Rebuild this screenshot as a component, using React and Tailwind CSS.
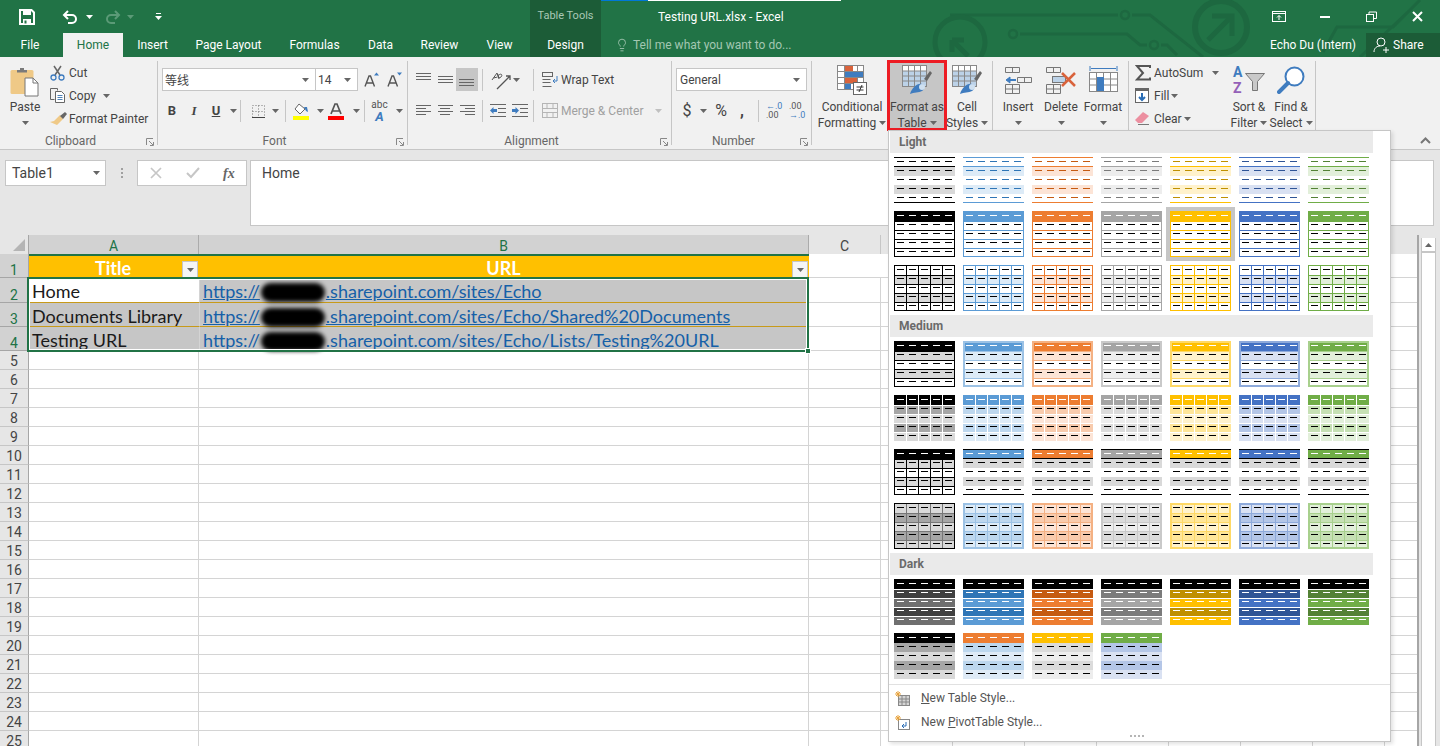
import React from 'react';
import { Lightbulb } from 'lucide-react';

const SANS = "font-['Roboto',sans-serif]";

const Caret = ({ color = '#666' }) => (
  <svg width="7" height="4" viewBox="0 0 7 4" className="shrink-0"><path d="M0 0h7L3.5 4z" fill={color} /></svg>
);

const Sep = () => <div className="w-px h-[22px] bg-[#c6c6c6] shrink-0" />;

// --- title bar icons
const SaveIcon = () => (
  <svg width="16" height="16" viewBox="0 0 16 16" fill="none"><path d="M1 1h11.5L15 3.5V15H1z" stroke="#fff" strokeWidth="2" /><path d="M4 1h8v5H4zM4 10h8v5H4z" fill="#fff" /><rect x="5.5" y="11.5" width="2" height="3" fill="#217346" /></svg>
);
const UndoIcon = ({ color = '#fff' }) => (
  <svg width="16" height="14" viewBox="0 0 16 14" fill="none"><path d="M6 1 2 5l4 4" stroke={color} strokeWidth="2" /><path d="M2.5 5H10a4 4 0 0 1 0 8H6" stroke={color} strokeWidth="2" /></svg>
);
const RedoIcon = ({ color = '#5b9a77' }) => (
  <svg width="16" height="14" viewBox="0 0 16 14" fill="none"><path d="m10 1 4 4-4 4" stroke={color} strokeWidth="2" /><path d="M13.5 5H6a4 4 0 0 0 0 8h4" stroke={color} strokeWidth="2" /></svg>
);
const CircuitArt = () => (
  <svg width="560" height="57" viewBox="0 0 560 57" fill="none" stroke="#1d6840" strokeWidth="3" className="absolute right-0 top-0">
    <path d="M70 15H238M252 15H270L323 57" />
    <circle cx="245" cy="15" r="4" strokeWidth="2.500" />
    <path d="M140 34H247L260 45H267" />
    <circle cx="133" cy="34" r="4" strokeWidth="2.500" />
    <circle cx="274" cy="45" r="4" strokeWidth="2.500" />
    <path d="M281 45H287L297 55" />
    <circle cx="80" cy="42" r="25" strokeWidth="5" />
    <path d="M72 40h12M72 40v12M72 40l16 16" strokeWidth="5" />
    <circle cx="341" cy="27" r="26" strokeWidth="6" />
    <path d="M332 16h20v20M352 16l-24 24" strokeWidth="5" />
    <path d="M443 52 457 27H513L540 0M480 57l50-47" />
  </svg>
);

// --- ribbon icons
const PasteIcon = () => (
  <svg width="30" height="30" viewBox="0 0 30 30">
    <rect x="0.5" y="3" width="23" height="24" rx="1.5" fill="#efc987" />
    <path d="M7 5V3h3V1h4v2h3v2.500H7z" fill="#7a7a7a" />
    <path d="M15 11h8l5 5v13H15z" fill="#fff" stroke="#777" />
    <path d="M23 11v5h5" fill="none" stroke="#777" />
  </svg>
);
const CutIcon = () => (
  <svg width="15" height="16" viewBox="0 0 15 16" fill="none">
    <path d="M4 1l6 9M11 1 5 10" stroke="#666" strokeWidth="1.500" />
    <circle cx="3.500" cy="12.500" r="2.500" stroke="#3f7cbf" strokeWidth="1.300" />
    <circle cx="11.500" cy="12.500" r="2.500" stroke="#3f7cbf" strokeWidth="1.300" />
  </svg>
);
const CopyIcon = () => (
  <svg width="16" height="15" viewBox="0 0 16 15" fill="none" stroke="#666">
    <path d="M.5.5h7v2M.5.5v11h4" />
    <path d="M5.500 3.500h6l3 3v8h-9z" fill="#fff" />
    <path d="M7.500 7.500h5M7.500 9.500h5M7.500 11.500h5" stroke="#4d82b8" />
  </svg>
);
const BrushIcon = () => (
  <svg width="17" height="14" viewBox="0 0 17 14"><path d="m10 3 3 4-6 6-7-3 4-1z" fill="#efc987" /><path d="m10 4 5-4 2 2-4 5z" fill="#666" /></svg>
);
const GrowFont = ({ up }) => (
  <svg width="15" height="16" viewBox="0 0 15 16">
    <path d="M1 14.500 5 4h1.500l4 10.500M2.500 11H9" fill="none" stroke="#555" strokeWidth="1.400" />
    <path d={up ? 'M10 3.500 12.500 .5 15 3.500z' : 'M10 .5h5l-2.500 3z'} fill="#3f7cbf" />
  </svg>
);
const BorderIcon = () => (
  <svg width="13" height="13" viewBox="0 0 13 13" fill="none" stroke="#777" strokeDasharray="1 2"><path d="M.5.5h12v12H.5zM6.500.5v12M.5 6.500h12" /><path d="M0 12.500h13" stroke="#444" strokeDasharray="none" /></svg>
);
const FillIcon = () => (
  <svg width="17" height="17" viewBox="0 0 17 17"><path d="m6 1 6 5-5 5-5-5z" fill="#fff" stroke="#666" /><path d="M11 4h3l1 5-2-1z" fill="#3f7cbf" /><rect y="13" width="16" height="4" fill="#ff0" /></svg>
);
const FontColorIcon = () => (
  <svg width="16" height="17" viewBox="0 0 16 17"><path d="M3 11 7 1h2l4 10M4.500 8h7" fill="none" stroke="#555" strokeWidth="1.700" /><rect y="13" width="16" height="4" fill="#f00" /></svg>
);
const PhoneticIcon = () => (
  <div className="w-[13px] h-[24px] text-center flex flex-col items-center">
    <div className="h-[11px] text-[10px] text-[#555] leading-[11px]">abc</div>
    <div className="h-[13px] text-[13px] font-bold italic text-[#3f7cbf] leading-[13px]">A</div>
  </div>
);
const AlignLines = ({ lines }) => (
  <svg width="15" height="13" viewBox="0 0 15 13" stroke="#666">
    {lines.map(([x1, x2, y]) => <path key={y} d={`M${x1} ${y + 0.5}H${x2}`} />)}
  </svg>
);
const OrientIcon = () => (
  <svg width="22" height="22" viewBox="0 0 22 22" fill="none">
    <path d="m2 11 5-7 2 6M3.500 9l4-1M9 6c2-2 4 0 2 2l-2 1-1-3z" stroke="#555" />
    <path d="m7 20 13-13M16 7h4v4" stroke="#555" strokeWidth="1.300" />
  </svg>
);
const IndentIcon = ({ flip }) => (
  <svg width="16" height="13" viewBox="0 0 16 13">
    <path d="M0 .5h16M8 4.500h8M8 8.500h8M0 12.500h16" stroke="#666" />
    <path d={flip ? 'M0 6.500 3.500 3v2H7v3H3.500v2z' : 'M7 6.500 3.500 3v2H0v3h3.500v2z'} fill="#3f7cbf" />
  </svg>
);
const WrapIcon = () => (
  <svg width="16" height="16" viewBox="0 0 16 16" fill="none" stroke="#666">
    <rect x=".5" y=".5" width="10" height="4" />
    <path d="M.5 7.500h8M.5 10.500h8M.5 14.500h9" />
    <path d="M15 4v5h-4m2-2-2 2 2 2" stroke="#3f7cbf" />
  </svg>
);
const MergeIcon = () => (
  <svg width="16" height="15" viewBox="0 0 16 15" fill="none" stroke="#b5b5b5"><rect x=".5" y=".5" width="15" height="14" /><path d="M.5 5.500h15M.5 9.500h15M5 .5v5M11 .5v5M5 9.500v5M11 9.500v5" /></svg>
);
const CondIcon = () => (
  <svg width="30" height="30" viewBox="0 0 30 30" fill="none" stroke="#888">
    <rect x=".5" y=".5" width="26" height="24" fill="#fff" />
    <path d="M.5 6.500h26M.5 12.500h26M.5 18.500h26M7.500.5v24M20.500.5v24" />
    <rect x="8" y="1" width="8" height="5" fill="#d9633c" stroke="none" />
    <rect x="8" y="7" width="18" height="5" fill="#3f7cbf" stroke="none" />
    <rect x="8" y="13" width="12" height="5" fill="#d9633c" stroke="none" />
    <rect x="8" y="19" width="6" height="5" fill="#3f7cbf" stroke="none" />
    <rect x="16.500" y="17.500" width="13" height="12" fill="#fff" stroke="#666" />
    <path d="M19.500 22h7M19.500 25h7M25 20l-3 7" stroke="#333" />
  </svg>
);
const TableBrushIcon = () => (
  <svg width="30" height="30" viewBox="0 0 30 30" fill="none" stroke="#888">
    <rect x=".5" y=".5" width="24" height="21" fill="#fff" />
    <rect x="1" y="6" width="23" height="15" fill="#bcd2e8" stroke="none" />
    <path d="M.5 6h24M.5 11h24M.5 16h24M6.500.5v21M12.500.5v21M18.500.5v21" />
    <path d="m22 14 6-8 2 2-5 8z" fill="#666" stroke="none" />
    <path d="M8 29c2-6 7-11 12-10 3 1 3 5 0 7-3 2-8 1-12 3z" fill="#3f7cbf" stroke="none" />
    <circle cx="20" cy="22" r="3" fill="#cfe0f0" stroke="none" />
  </svg>
);
const InsertIcon = () => (
  <svg width="27" height="27" viewBox="0 0 27 27" fill="none" stroke="#777">
    <path d="M.5.5h14v5H.5zM7.500.5v5M12.500 10.500h14v5h-14zM19.500 10.500v5M.5 17.500h14v9H.5zM.5 22h14M7.500 17.500v9" />
    <path d="M1 13l4-3v6z" stroke="#3f7cbf" fill="#3f7cbf" />
    <path d="M4 13h7" stroke="#3f7cbf" strokeWidth="2" />
  </svg>
);
const DeleteIcon = () => (
  <svg width="30" height="27" viewBox="0 0 30 27" fill="none" stroke="#777">
    <path d="M.5.5h14v5H.5zM7.500.5v5M.5 17.500h14v9H.5zM.5 22h14M7.500 17.500v9" />
    <rect x="6.500" y="9.500" width="13" height="6" fill="#bcd2e8" stroke="#777" />
    <path d="m16 6 13 13M29 6 16 19" stroke="#d9633c" strokeWidth="2.500" />
  </svg>
);
const FormatIcon = () => (
  <svg width="29" height="31" viewBox="0 0 29 31" fill="none" stroke="#888">
    <path d="M1 1v5M28 1v5M2 3.500h25" stroke="#3f7cbf" />
    <rect x=".5" y="7.500" width="28" height="19" fill="#fff" />
    <path d="M.5 14h28M.5 20h28M7.500 7.500V27M14.500 7.500V27M21.500 7.500V27" />
    <rect x="8" y="12" width="7" height="14" fill="#3f7cbf" stroke="none" />
  </svg>
);
const SigmaIcon = () => (
  <svg width="16" height="16" viewBox="0 0 16 16" fill="none"><path d="M15 3V1H2l6 7-6 6.500h13v-2" stroke="#555" strokeWidth="2" /></svg>
);
const FillDownIcon = () => (
  <svg width="14" height="15" viewBox="0 0 14 15" fill="none"><rect x=".5" y=".5" width="13" height="14" fill="#fff" stroke="#666" /><rect x="0" y="0" width="14" height="3" fill="#666" /><path d="M7 5v7M4 9l3 3 3-3" stroke="#2a6db5" strokeWidth="2" /></svg>
);
const EraserIcon = () => (
  <svg width="15" height="13" viewBox="0 0 15 13"><path d="m0 8 8-8 6 4-7 7H3z" fill="#ec8fa0" /><path d="M3 12.500h11" stroke="#777" /></svg>
);
const SortIcon = () => (
  <div className="relative w-[32px] h-[32px] font-bold text-[14px] leading-[16px]">
    <div className="h-[16px] text-[#3f7cbf]">A</div>
    <div className="h-[16px] text-[#9460b8]">Z</div>
    <svg width="20" height="18" viewBox="0 0 20 18" fill="none" className="absolute right-0 top-[9px]">
      <path d="M.5.5h19l-7 8v9h-5v-9z" fill="#c9c9c9" stroke="#777" />
    </svg>
  </div>
);
const FindIcon = () => (
  <svg width="28" height="28" viewBox="0 0 28 28" fill="none"><circle cx="17.500" cy="10.500" r="9" stroke="#3f7cbf" strokeWidth="2" fill="#fff" /><path d="m11 17-9 9" stroke="#3f7cbf" strokeWidth="4" strokeLinecap="round" /></svg>
);

const Launcher = () => (
  <svg width="8" height="8" viewBox="0 0 8 8" fill="none" stroke="#888" className="absolute right-[3px] top-[7px]">
    <path d="M.5 7V.5H7" /><path d="m3 3 4 4M4 7.500h3.500V4" />
  </svg>
);

const Group = ({ label, launcher, className, children }) => (
  <div className={`flex flex-col shrink-0 h-[84px] border-r border-[#c6c6c6] ${className}`}>
    <div className="h-[70px] flex">{children}</div>
    <div className="relative h-[14px] pr-[16px] text-center text-[12px] leading-[20px] text-[#666]">
      {label}
      {launcher && <Launcher />}
    </div>
  </div>
);

const Big = ({ icon, lines, caret, className = '' }) => (
  <div className={`flex flex-col items-center shrink-0 ${className}`}>
    <div className="h-[38px] flex items-center justify-center">{icon}</div>
    {lines.map((line, i) => (
      <div key={line} className="h-[16px] leading-[16px] flex items-center gap-[3px] whitespace-nowrap">
        {line}
        {caret && i === lines.length - 1 && <Caret />}
      </div>
    ))}
    {lines.length === 1 && <div className="h-[16px] flex items-center"><Caret /></div>}
  </div>
);

const Small = ({ icon, text, caret, gap = 'ml-[8px]' }) => (
  <div className="h-[23px] flex items-center whitespace-nowrap">
    <div className="w-[19px] flex justify-start shrink-0">{icon}</div>
    <span>{text}</span>
    {caret && <span className={gap}><Caret /></span>}
  </div>
);

const Combo = ({ className, children }) => (
  <div className={`h-[23px] bg-white border border-[#c6c6c6] flex items-center justify-between pl-[2px] pr-[6px] shrink-0 ${className}`}>
    <span className="truncate">{children}</span>
    <Caret />
  </div>
);

const Ribbon = () => (
  <div className="h-[93px] bg-[#f1f1f1] border-b border-[#c6c6c6] flex pt-[4px] text-[12px] text-[#444] shrink-0 relative">
    <Group label="Clipboard" launcher className="w-[158px]">
      <div className="w-[50px] flex flex-col items-center">
        <div className="h-[38px] flex items-center pt-[4px]"><PasteIcon /></div>
        <div className="h-[16px] leading-[16px]">Paste</div>
        <div className="h-[16px] flex items-center"><Caret /></div>
      </div>
      <div>
        <Small icon={<CutIcon />} text="Cut" />
        <Small icon={<CopyIcon />} text="Copy" caret gap="ml-[7px]" />
        <Small icon={<BrushIcon />} text="Format Painter" />
      </div>
    </Group>

    <Group label="Font" launcher className="w-[250px]">
      <div className="pl-[4px] pt-[7px]">
        <div className="flex items-center">
          <Combo className="w-[154px] font-['Noto_Sans_CJK_SC',sans-serif]">等线</Combo>
          <Combo className="w-[43px] ml-[-1px]">14</Combo>
          <div className="w-[23px] flex justify-center ml-[2px]"><GrowFont up /></div>
          <div className="w-[23px] flex justify-center"><GrowFont /></div>
        </div>
        <div className="flex items-center h-[22px] mt-[9px] text-[13px]">
          <div className="w-[22px] ml-[-1px] text-center font-bold">B</div>
          <div className="w-[22px] text-center italic font-['Liberation_Serif',serif] font-bold">I</div>
          <div className="w-[22px] text-center underline font-bold">U</div>
          <div className="w-[10px] ml-[3px]"><Caret /></div>
          <div className="w-[12px]"><Sep /></div>
          <div className="w-[20px]"><BorderIcon /></div>
          <div className="w-[11px]"><Caret /></div>
          <div className="w-[8px] ml-[2px]"><Sep /></div>
          <div className="w-[24px]"><FillIcon /></div>
          <div className="w-[10px]"><Caret /></div>
          <div className="w-[26px] pl-[1px]"><FontColorIcon /></div>
          <div className="w-[11px]"><Caret /></div>
          <div className="w-[9px]"><Sep /></div>
          <div className="w-[23px]"><PhoneticIcon /></div>
          <div className="w-[10px]"><Caret /></div>
        </div>
      </div>
    </Group>

    <Group label="Alignment" launcher className="w-[264px]">
      <div className="pl-[8px] pt-[7px]">
        <div className="flex items-center h-[23px]">
          <div className="w-[22px] h-[23px] pt-[4px]"><AlignLines lines={[[0, 15, 1], [0, 15, 4], [0, 15, 7]]} /></div>
          <div className="w-[18px] h-[23px] pt-[7px]"><AlignLines lines={[[0, 15, 1], [0, 15, 4], [0, 15, 7]]} /></div>
          <div className="w-[22px] h-[23px] bg-[#c6c6c6] pt-[10px] pl-[3px]"><AlignLines lines={[[0, 15, 1], [0, 15, 4], [0, 15, 7]]} /></div>
          <div className="w-[12px] pl-[4px]"><Sep /></div>
          <div className="w-[23px]"><OrientIcon /></div>
          <div className="w-[20px]"><Caret /></div>
          <Sep />
          <div className="flex items-center ml-[8px]">
            <div className="w-[19px]"><WrapIcon /></div>
            <span>Wrap Text</span>
          </div>
        </div>
        <div className="flex items-center h-[23px] mt-[8px]">
          <div className="w-[22px]"><AlignLines lines={[[0, 15, 1], [0, 10, 4], [0, 15, 7], [0, 10, 10]]} /></div>
          <div className="w-[22px]"><AlignLines lines={[[0, 15, 1], [2, 12, 4], [0, 15, 7], [2, 12, 10]]} /></div>
          <div className="w-[18px]"><AlignLines lines={[[0, 15, 1], [5, 15, 4], [0, 15, 7], [5, 15, 10]]} /></div>
          <div className="w-[12px] pl-[4px]"><Sep /></div>
          <div className="w-[22px]"><IndentIcon flip /></div>
          <div className="w-[21px]"><IndentIcon /></div>
          <Sep />
          <div className="flex items-center ml-[8px] text-[#a0a0a0]">
            <div className="w-[19px]"><MergeIcon /></div>
            <span>Merge &amp; Center</span>
            <span className="ml-[12px]"><Caret color="#c0c0c0" /></span>
          </div>
        </div>
      </div>
    </Group>

    <Group label="Number" launcher className="w-[140px]">
      <div className="pl-[4px] pt-[7px]">
        <Combo className="w-[131px] pl-[3px]">General</Combo>
        <div className="flex items-center h-[23px] mt-[8px] text-[16px]">
          <div className="w-[14px] ml-[4px] text-center">$</div>
          <div className="w-[14px] pl-[6px]"><Caret /></div>
          <div className="w-[26px] text-center">%</div>
          <div className="w-[16px] text-center font-bold">,</div>
          <div className="w-[8px] ml-[8px]"><Sep /></div>
          <div className="w-[23px] text-[9px] leading-[9px] text-[#555]"><div className="text-[#3f7cbf] h-[9px]">←.0</div><div className="h-[9px]">.00</div></div>
          <div className="w-[16px] text-[9px] leading-[9px] text-[#555]"><div className="h-[9px]">.00</div><div className="text-[#3f7cbf] h-[9px]">→.0</div></div>
        </div>
      </div>
    </Group>

    <Group label="" className="w-[181px]">
      <Big icon={<CondIcon />} lines={['Conditional', 'Formatting']} caret className="w-[75px] pl-[5px]" />
      <div className="h-[71px] w-[60px] shrink-0 border-[3px] border-[#ed1c24] mt-[-1px] bg-[#c6c6c6]">
        <Big icon={<TableBrushIcon />} lines={['Format as', 'Table']} caret className="w-full mt-[-2px]" />
      </div>
      <Big icon={<TableBrushIcon />} lines={['Cell', 'Styles']} caret className="w-[40px]" />
    </Group>

    <Group label="" className="w-[136px]">
      <Big icon={<InsertIcon />} lines={['Insert']} className="w-[44px] ml-[3px]" />
      <Big icon={<DeleteIcon />} lines={['Delete']} className="w-[42px]" />
      <Big icon={<FormatIcon />} lines={['Format']} className="w-[42px]" />
    </Group>

    <Group label="" className="w-[187px]">
      <div className="pl-[6px] w-[99px]">
        <Small icon={<SigmaIcon />} text="AutoSum" caret gap="ml-[9px]" />
        <Small icon={<FillDownIcon />} text="Fill" caret gap="ml-[2px]" />
        <Small icon={<EraserIcon />} text="Clear" caret gap="ml-[2px]" />
      </div>
      <Big icon={<SortIcon />} lines={['Sort &', 'Filter']} caret className="w-[42px]" />
      <Big icon={<FindIcon />} lines={['Find &', 'Select']} caret className="w-[42px]" />
    </Group>

    <svg width="11" height="7" viewBox="0 0 11 7" fill="none" className="absolute right-[9px] bottom-[5px]"><path d="m1 6 4.500-4.500L10 6" stroke="#777" strokeWidth="2" /></svg>
  </div>
);

const TitleBar = () => (
  <div className="relative h-[57px] bg-[#217346] text-white text-[12px] shrink-0 overflow-hidden">
    <CircuitArt />
    <div className="relative h-[33px] flex items-center">
      <div className="w-[530px] flex items-center">
        <div className="ml-[19px]"><SaveIcon /></div>
        <div className="ml-[27px]"><UndoIcon /></div>
        <div className="ml-[8px]"><Caret color="#fff" /></div>
        <div className="ml-[12px]"><RedoIcon /></div>
        <div className="ml-[6px]"><Caret color="#5b9a77" /></div>
        <div className="ml-[21px] flex flex-col items-center gap-[2px]"><div className="w-[5px] h-px bg-white" /><Caret color="#fff" /></div>
      </div>
      <div className="w-[71px] h-full bg-[#1c5c37] text-[#a9c9b6] text-[11px] flex items-center justify-center whitespace-nowrap">Table Tools</div>
      <div className="relative flex-1 h-full flex items-center pl-[57px] whitespace-nowrap">
        <div className="absolute left-0 top-0 flex h-px">
          <div className="w-[47px] bg-[#0078d7]" />
          <div className="w-[193px] bg-white" />
        </div>
        Testing URL.xlsx - Excel
      </div>
      <div className="flex items-center">
        <div className="w-[46px] flex justify-center">
          <svg width="14" height="11" viewBox="0 0 14 11" fill="none" stroke="#fff"><rect x=".5" y=".5" width="13" height="10" /><path d="M.5 2.500h13M7 9V4.500M5 6.500l2-2 2 2" /></svg>
        </div>
        <div className="w-[46px] flex justify-center"><div className="w-[10px] h-[2px] bg-white" /></div>
        <div className="w-[46px] flex justify-center">
          <svg width="11" height="11" viewBox="0 0 11 11" fill="none" stroke="#fff"><path d="M3 3V1h7.500v6.500H8" /><rect x=".5" y="3.500" width="7" height="7" /></svg>
        </div>
        <div className="w-[46px] flex justify-center">
          <svg width="11" height="11" viewBox="0 0 11 11" fill="none" stroke="#fff" strokeWidth="2"><path d="m1 1 9 9M10 1l-9 9" /></svg>
        </div>
      </div>
    </div>
    <div className="relative h-[24px] flex items-stretch leading-[24px]">
      {[
        ['File', 'w-[59px] pl-[1px]'],
        ['Home', 'w-[60px] ml-[4px] bg-[#f1f1f1] text-[#217346]'],
        ['Insert', 'w-[59px]'],
        ['Page Layout', 'w-[93px]'],
        ['Formulas', 'w-[79px]'],
        ['Data', 'w-[53px]'],
        ['Review', 'w-[65px]'],
        ['View', 'w-[55px]'],
        ['Design', 'w-[71px] ml-[3px] bg-[#1c5c37]'],
      ].map(([name, cls]) => (
        <div key={name} className={`text-center whitespace-nowrap shrink-0 ${cls}`}>{name}</div>
      ))}
      <div className="flex items-center ml-[14px] text-[#a3c7b2] whitespace-nowrap">
        <Lightbulb size={14} strokeWidth={1.500} />
        <span className="ml-[4px]">Tell me what you want to do...</span>
      </div>
      <div className="flex-1" />
      <div className="whitespace-nowrap mr-[10px]">Echo Du (Intern)</div>
      <div className="w-[74px] bg-[#1c5c37] flex items-center pl-[7px] gap-[4px]">
        <svg width="16" height="16" viewBox="0 0 16 16" fill="none" stroke="#fff"><circle cx="8" cy="5" r="4" /><path d="M1 15c0-4 3-6 6-6M10 13h6M13 10v6" /></svg>
        Share
      </div>
    </div>
  </div>
);

const FormulaBar = () => (
  <div className="h-[85px] bg-[#e6e6e6] flex pt-[10px] text-[14px] text-[#444] shrink-0">
    <div className="w-[101px] h-[26px] ml-[5px] bg-white border border-[#c6c6c6] flex items-center justify-between pl-[6px] pr-[5px]">
      Table1
      <Caret />
    </div>
    <div className="w-[31px] h-[26px] flex items-center justify-center">
      <div className="w-[2px] h-[10px] border-l-2 border-dotted border-[#a0a0a0]" />
    </div>
    <div className="w-[110px] h-[26px] bg-white border border-[#c6c6c6] flex items-center text-[#c6c6c6]">
      <svg width="12" height="12" viewBox="0 0 12 12" fill="none" stroke="#c6c6c6" strokeWidth="1.700" className="ml-[12px]"><path d="m1 1 10 10M11 1 1 11" /></svg>
      <svg width="14" height="12" viewBox="0 0 14 12" fill="none" stroke="#c6c6c6" strokeWidth="2" className="ml-[24px]"><path d="m1 6 4 4 8-9" /></svg>
      <span className="ml-[23px] font-['Liberation_Serif',serif] italic font-bold text-[14px] text-[#666]">fx</span>
    </div>
    <div className="w-[1184px] h-[66px] ml-[3px] bg-white border border-[#c6c6c6] pl-[11px] pt-[2px]">Home</div>
  </div>
);

const ROW_HEAD = 'w-[29px] shrink-0 border-r border-b text-center text-[14px] leading-none';
const extraCols = ['D', 'E', 'F', 'G', 'H', 'I', 'J'];

const FilterBtn = () => (
  <div className="w-[16px] h-[17px] mr-px bg-[#f5f5f5] border border-[#c6c6c6] flex items-center justify-center self-end"><Caret /></div>
);

const Redacted = () => (
  <span className="inline-block w-[64px] h-[19px] mx-px align-[-4px] rounded-full bg-black blur-[2px]" />
);

const tableRows = [
  { n: 2, title: 'Home', url: '.sharepoint.com/sites/Echo', h: 'h-[25px]', a: 'bg-white', link: 'underline' },
  { n: 3, title: 'Documents Library', url: '.sharepoint.com/sites/Echo/Shared%20Documents', h: 'h-[24px]', a: 'bg-[#c6c6c6]', link: 'underline' },
  { n: 4, title: 'Testing URL', url: '.sharepoint.com/sites/Echo/Lists/Testing%20URL', h: 'h-[24px]', a: 'bg-[#c6c6c6]', link: '' },
];

const Sheet = () => (
  <div className="relative flex-1 flex min-h-0 bg-[#e6e6e6] font-['Lato',sans-serif] overflow-hidden">
    <div className="w-[1419px] shrink-0 bg-white border-r-2 border-[#a6a6a6]">
      {/* column headers */}
      <div className={`h-[19px] flex text-[14px] leading-[23px] text-center ${SANS}`}>
        <div className="w-[29px] shrink-0 bg-[#e6e6e6] border-r border-[#a6a6a6] flex justify-end items-end pr-[3px] pb-[3px]">
          <svg width="12" height="12" viewBox="0 0 12 12"><path d="M12 0v12H0z" fill="#b5b5b5" /></svg>
        </div>
        <div className="w-[170px] bg-[#d2d2d2] border-r border-[#ababab] text-[#217346]">A</div>
        <div className="w-[610px] bg-[#d2d2d2] border-r border-[#ababab] text-[#217346]">B</div>
        <div className="w-[72px] bg-[#e6e6e6] border-r border-[#c6c6c6] text-[#444]">C</div>
        <div className="flex-1 bg-[#e6e6e6]" />
      </div>
      {/* header row of the table */}
      <div className="h-[24px] flex">
        <div className={`${ROW_HEAD} bg-[#d2d2d2] border-[#a6a6a6] text-[#217346] flex items-end justify-center ${SANS}`}>1</div>
        <div className="w-[780px] flex border-t-2 border-[#217346] bg-[#ffc000] text-white font-bold text-[18px] leading-[24px]">
          <div className="w-[170px] pl-[15px] flex justify-between"><span className="flex-1 text-center">Title</span><FilterBtn /></div>
          <div className="w-[610px] flex"><span className="flex-1 text-center pl-[16px]">URL</span><FilterBtn /></div>
        </div>
        <div className="flex-1 border-b border-[#d4d4d4]" />
      </div>
      {/* body rows */}
      <div className="relative">
        {tableRows.map((row) => (
          <div key={row.n} className={`${row.h} flex`}>
            <div className={`${ROW_HEAD} bg-[#d2d2d2] border-[#a6a6a6] text-[#217346] flex items-end justify-center ${SANS}`}>{row.n}</div>
            <div className={`w-[170px] ${row.a} border-b border-[#c79a1a] pl-[3px] text-[18px] leading-[27px] text-[#1a1a1a] whitespace-nowrap`}>{row.title}</div>
            <div className={`w-[610px] bg-[#c6c6c6] border-l border-b border-l-[#d4d4d4] border-b-[#c79a1a] pl-[3px] text-[18px] leading-[27px] text-[#1560a8] whitespace-nowrap ${row.link}`}>
              https://<Redacted />{row.url}
            </div>
            <div className="w-[72px] border-r border-b border-[#d4d4d4]" />
            <div className="flex-1 border-b border-[#d4d4d4]" />
          </div>
        ))}
        {/* selection frame */}
        <div className="absolute left-[27px] top-[-1px] w-[782px] h-[75px] border-2 border-[#217346] pointer-events-none">
          <div className="absolute inset-0 border border-white" />
          <div className="absolute right-[-4px] bottom-[-4px] w-[6px] h-[6px] bg-[#217346] border border-white" />
        </div>
      </div>
      {/* empty rows */}
      {Array.from({ length: 21 }, (_, i) => i + 5).map((n) => (
        <div key={n} className="h-[19px] flex">
          <div className={`${ROW_HEAD} bg-[#e6e6e6] border-[#c6c6c6] border-r-[#a6a6a6] text-[#444] flex items-center justify-center pt-[1px] ${SANS}`}>{n}</div>
          <div className="w-[170px] border-r border-b border-[#d4d4d4]" />
          <div className="w-[610px] border-r border-b border-[#d4d4d4]" />
          <div className="w-[72px] border-r border-b border-[#d4d4d4]" />
          {extraCols.map((c) => <div key={c} className="w-[72px] border-r border-b border-[#d4d4d4]" />)}
          <div className="flex-1 border-b border-[#d4d4d4]" />
        </div>
      ))}
    </div>
    {/* vertical scrollbar */}
    <div className="w-[15px] ml-[2px] mt-[3px] bg-white border-x border-[#c6c6c6]">
      <div className="h-[15px] border-b-2 border-[#c6c6c6] flex items-center justify-center">
        <svg width="7" height="4" viewBox="0 0 7 4"><path d="M0 4h7L3.500 0z" fill="#666" /></svg>
      </div>
    </div>
  </div>
);

// --- table style gallery
const PAL = [
  { main: '#000000', dash: '#000000', t1: '#d9d9d9', t2: '#a6a6a6', mid: '#000000', dk: '#404040', dm: '#6f6f6f' },
  { main: '#5b9bd5', dash: '#2e75b6', t1: '#ddebf7', t2: '#bdd7ee', mid: '#9cc2e5', dk: '#2e75b6', dm: '#5b9bd5' },
  { main: '#ed7d31', dash: '#c55a11', t1: '#fce4d6', t2: '#f8cbad', mid: '#f4b183', dk: '#c55a11', dm: '#ed7d31' },
  { main: '#a5a5a5', dash: '#7b7b7b', t1: '#ededed', t2: '#dbdbdb', mid: '#c9c9c9', dk: '#7b7b7b', dm: '#a5a5a5' },
  { main: '#ffc000', dash: '#bf9000', t1: '#fff2cc', t2: '#ffe699', mid: '#ffd966', dk: '#bf9000', dm: '#ffc000' },
  { main: '#4472c4', dash: '#2f5496', t1: '#d9e1f2', t2: '#b4c6e7', mid: '#8eaadb', dk: '#2f5496', dm: '#4472c4' },
  { main: '#70ad47', dash: '#538135', t1: '#e2efda', t2: '#c6e0b4', mid: '#a8d08d', dk: '#538135', dm: '#70ad47' },
];
const W = '#ffffff';
const RY = [0, 10, 19, 28, 37];
const RH = [10, 9, 9, 9, 9];
const COLX = [12, 24, 36, 48];

const styleOf = (kind, p, i) => {
  const black = i === 0;
  switch (kind) {
    case 'l1':
      return { fills: [null, p.t1, null, p.t1, null], hTop: p.main, hHead: p.main, hEnd: p.main, dash: p.dash };
    case 'l2':
      return { fills: [p.main, null, null, null, null], outline: p.main, hLines: p.main, dash: '#000', headDash: W };
    case 'l3':
      return { fills: [null, p.t1, null, p.t1, null], outline: p.main, hLines: p.main, vLines: p.main, dash: '#000' };
    case 'm1':
      return { fills: [p.main, p.t1, null, p.t1, null], outline: p.mid, hLines: p.mid, dash: '#000', headDash: W, thick: black ? 1 : 2 };
    case 'm2':
      return { fills: [p.main, p.t2, p.t1, p.t2, p.t1], hLines: W, vLines: W, dash: '#000', headDash: W };
    case 'm3':
      return black
        ? { fills: [p.main, p.t1, null, p.t1, null], outline: '#000', hLines: '#000', vLines: '#000', dash: '#000', headDash: W }
        : { fills: [p.main, '#d9d9d9', null, '#d9d9d9', null], hTop: '#000', hHead: '#000', hEnd: '#000', dash: '#000', headDash: W };
    case 'm4':
      return {
        fills: black ? ['#d9d9d9', '#a6a6a6', '#d9d9d9', '#a6a6a6', '#d9d9d9'] : [p.t1, p.t2, p.t1, p.t2, p.t1],
        outline: black ? '#000' : p.mid,
        hLines: black ? '#777' : p.mid,
        vLines: black ? '#777' : p.mid,
        dash: '#000',
        thick: black ? 1 : 2,
      };
    default:
      return { fills: ['#000', p.dk, p.dm, p.dk, p.dm], hLines: W, dash: W, headDash: W };
  }
};

const Thumb = ({ s }) => {
  const t = s.thick || 1;
  return (
    <svg width="61" height="46" viewBox="0 0 61 46" shapeRendering="crispEdges" className="block">
      {s.fills.map((fill, r) => fill && <rect key={r} x="0" y={RY[r]} width="61" height={RH[r]} fill={fill} />)}
      {s.hLines && RY.slice(1).map((y) => <rect key={y} x="0" y={y} width="61" height="1" fill={s.hLines} />)}
      {s.vLines && COLX.map((x) => <rect key={x} x={x} y="0" width="1" height="46" fill={s.vLines} />)}
      {s.hTop && <rect x="0" y="0" width="61" height="1" fill={s.hTop} />}
      {s.hHead && <rect x="0" y="9" width="61" height="1" fill={s.hHead} />}
      {s.hEnd && <rect x="0" y="45" width="61" height="1" fill={s.hEnd} />}
      {s.outline && <rect x={t / 2} y={t / 2} width={61 - t} height={46 - t} fill="none" stroke={s.outline} strokeWidth={t} />}
      {RY.map((y, r) => [3, 15, 27, 39, 51].map((x) => (
        <rect key={`${r}-${x}`} x={x} y={r === 0 ? 4 : y + 3} width="7" height="1" fill={r === 0 && s.headDash ? s.headDash : s.dash} />
      )))}
    </svg>
  );
};

const ThumbRow = ({ kind, selected }) => (
  <>
    {PAL.map((p, i) => (
      <div key={i} className={selected === i ? 'bg-white outline-4 outline-[#c6c6c6]' : ''}>
        <Thumb s={styleOf(kind, p, i)} />
      </div>
    ))}
  </>
);

const darkRow2 = [
  ['#000', '#a6a6a6', '#d9d9d9'],
  ['#ed7d31', '#bdd7ee', '#deeaf6'],
  ['#ffc000', '#dbdbdb', '#ededed'],
  ['#70ad47', '#b4c6e7', '#d9e1f2'],
];

const SectionHead = ({ children }) => (
  <div className="h-[22px] w-[483px] ml-px bg-[#eaeaea] pl-[9px] font-bold text-[#6a6a6a] leading-[22px]">{children}</div>
);

const Gallery = ({ children }) => (
  <div className="grid grid-cols-[repeat(7,61px)] gap-2 pl-[5px] py-1">{children}</div>
);

const TablePanel = () => (
  <div className="absolute left-[888px] top-[130px] w-[503px] h-[612px] bg-white border border-[#c6c6c6] shadow-[2px_2px_4px_rgba(0,0,0,0.12)] text-[12px]">
    <SectionHead>Light</SectionHead>
    <Gallery>
      <ThumbRow kind="l1" />
      <ThumbRow kind="l2" selected={4} />
      <ThumbRow kind="l3" />
    </Gallery>
    <SectionHead>Medium</SectionHead>
    <Gallery>
      <ThumbRow kind="m1" />
      <ThumbRow kind="m2" />
      <ThumbRow kind="m3" />
      <ThumbRow kind="m4" />
    </Gallery>
    <SectionHead>Dark</SectionHead>
    <Gallery>
      <ThumbRow kind="d1" />
      {darkRow2.map(([head, a, b], i) => (
        <Thumb key={i} s={{ fills: [head, a, b, a, b], dash: '#000', headDash: W }} />
      ))}
    </Gallery>
    <div className="border-t border-[#e1e1e1] mt-px pt-[1px] text-[#555]">
      {[
        [<span key="n"><span className="underline">N</span>ew Table Style...</span>, 'table'],
        [<span key="p">New <span className="underline">P</span>ivotTable Style...</span>, 'pivot'],
      ].map(([label, key]) => (
        <div key={key} className="h-[24px] flex items-center pl-[6px]">
          <svg width="15" height="15" viewBox="0 0 15 15" fill="none" stroke="#888" className="shrink-0">
            <rect x="3.500" y="4.500" width="11" height="10" fill={key === 'table' ? '#d5d5d5' : '#fff'} />
            {key === 'table'
              ? <path d="M3.500 8h11M3.500 11h11M7 4.500v10M11 4.500v10" />
              : <path d="M11 7v4H7M9 9l-2 2 2 2" stroke="#2a6db5" />}
            <path d="M3 0v6M0 3h6M1 1l4 4M5 1 1 5" stroke="#e8a33d" />
          </svg>
          <span className="ml-[11px]">{label}</span>
        </div>
      ))}
    </div>
    <div className="flex justify-center gap-[2px] mt-[1px] ml-[-6px]">
      {[0, 1, 2, 3].map((d) => <div key={d} className="w-[2px] h-[2px] bg-[#b5b5b5]" />)}
    </div>
  </div>
);

export default function App() {
  return (
    <div className={`relative w-[1440px] h-[746px] overflow-hidden flex flex-col ${SANS}`}>
      <TitleBar />
      <Ribbon />
      <FormulaBar />
      <Sheet />
      <TablePanel />
    </div>
  );
}
